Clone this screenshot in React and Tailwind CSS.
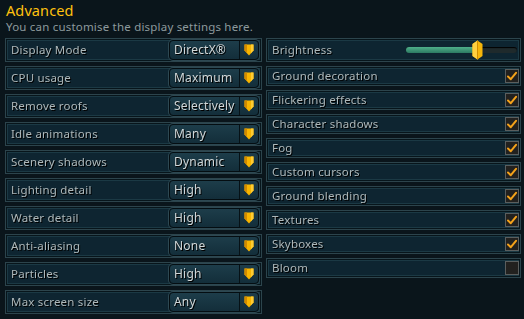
import React from "react";

const left = [
  ["Display Mode", "DirectX®"],
  ["CPU usage", "Maximum"],
  ["Remove roofs", "Selectively"],
  ["Idle animations", "Many"],
  ["Scenery shadows", "Dynamic"],
  ["Lighting detail", "High"],
  ["Water detail", "High"],
  ["Anti-aliasing", "None"],
  ["Particles", "High"],
  ["Max screen size", "Any"],
];

const right = [
  ["Ground decoration", true],
  ["Flickering effects", true],
  ["Character shadows", true],
  ["Fog", true],
  ["Custom cursors", true],
  ["Ground blending", true],
  ["Textures", true],
  ["Skyboxes", true],
  ["Bloom", false],
];

function Shield() {
  return (
    <svg width="10" height="12" viewBox="0 0 10 12">
      <path d="M0.5 0.5 H9.5 V6.5 L5 11.5 L0.5 6.5 Z" fill="#f7b500" />
      <path d="M0.5 0.5 H3 V9 L0.5 6.5 Z" fill="#d18a00" />
      <path d="M7 0.5 H9.5 V6.5 L7 9.2 Z" fill="#ffcc33" />
    </svg>
  );
}

function Check() {
  return (
    <svg width="12" height="12" viewBox="0 0 12 12">
      <path d="M2 6.5 L4.8 9.2 L10 2.8" fill="none" stroke="#f4a21a" strokeWidth="2" strokeLinecap="round" strokeLinejoin="round" />
    </svg>
  );
}

export default function App() {
  return (
    <div
      className="w-[524px] h-[319px] overflow-hidden bg-[#0a151b] text-[#adb8ba]"
      style={{ fontFamily: '"Noto Sans", "Open Sans", sans-serif' }}
    >
      <div className="pl-[6px] pt-[0px]">
        <div className="text-[14.5px] leading-[20px] text-[#ffc20e] tracking-[0.1px]">Advanced</div>
        <div className="text-[11.5px] leading-[16px] text-[#8d9a9d] tracking-[0.2px] mt-[-1px]">
          You can customise the display settings here.
        </div>
      </div>
      <div className="flex gap-[4px] pl-[5px] mt-[3px]">
        <div className="flex flex-col gap-[4px] w-[257px]">
          {left.map(([l, v]) => (
            <div key={l} className="h-[24px] border border-[#2c444c] bg-[#07151b] p-px">
              <div className="flex items-center h-full bg-[#0e2531] shadow-[inset_0_0_0_1px_#1b3944] pl-[4px] pr-px">
                <span className="flex-1 text-[11.5px] tracking-[0.2px] drop-shadow-[1px_1px_0_#000]">{l}</span>
                <div className="flex h-[20px] w-[90px] rounded-[4px] border border-[#040d11] bg-gradient-to-b from-[#1d3d4a] to-[#132e3a] shadow-[0_0_0_1px_#2d4852]">
                  <span className="flex-1 pl-[4px] text-[12px] leading-[18px] text-[#d0d7d8] tracking-[0.2px] drop-shadow-[1px_1px_0_#000]">{v}</span>
                  <div className="w-px bg-[#061116]" />
                  <div className="w-[18px] flex items-center justify-center">
                    <Shield />
                  </div>
                </div>
              </div>
            </div>
          ))}
        </div>
        <div className="flex flex-col w-[255px]">
          <div className="h-[24px] border border-[#2c444c] bg-[#07151b] p-px">
            <div className="flex items-center h-full bg-[#0e2531] shadow-[inset_0_0_0_1px_#1b3944] pl-[4px]">
              <span className="flex-1 text-[11.5px] tracking-[0.2px] drop-shadow-[1px_1px_0_#000]">Brightness</span>
              <div className="relative w-[111px] h-[6px] mr-[2px] rounded-full bg-[#1f2a2c] shadow-[inset_0_1px_1px_#000]">
                <div className="h-full w-[72px] rounded-full bg-gradient-to-b from-[#4fb08a] to-[#2c7a62]" />
                <div className="absolute left-[66px] top-[-7px]">
                  <svg width="11" height="20" viewBox="0 0 11 20">
                    <path d="M5.5 0.5 L10.5 4 V16 L5.5 19.5 L0.5 16 V4 Z" fill="#f6b60a" />
                    <path d="M5.5 0.5 L0.5 4 V16 L5.5 19.5 Z" fill="#ffd040" />
                    <path d="M5.5 0.5 V19.5" stroke="#d08e00" strokeWidth="1" />
                  </svg>
                </div>
              </div>
            </div>
          </div>
          <div className="flex flex-col gap-[4px] mt-[4px]">
            {right.map(([l, c]) => (
              <div key={l} className="h-[20px] border border-[#2c444c] bg-[#07151b] p-px">
                <div className="flex items-center h-full bg-[#0e2531] shadow-[inset_0_0_0_1px_#1b3944] pl-[4px] pr-0">
                  <span className="flex-1 text-[11.5px] tracking-[0.2px] drop-shadow-[1px_1px_0_#000]">{l}</span>
                  <div className="w-[14px] h-[14px] border border-[#5a5e5e] bg-[#22211f] flex items-center justify-center">
                    {c && <Check />}
                  </div>
                </div>
              </div>
            ))}
          </div>
        </div>
      </div>
    </div>
  );
}
